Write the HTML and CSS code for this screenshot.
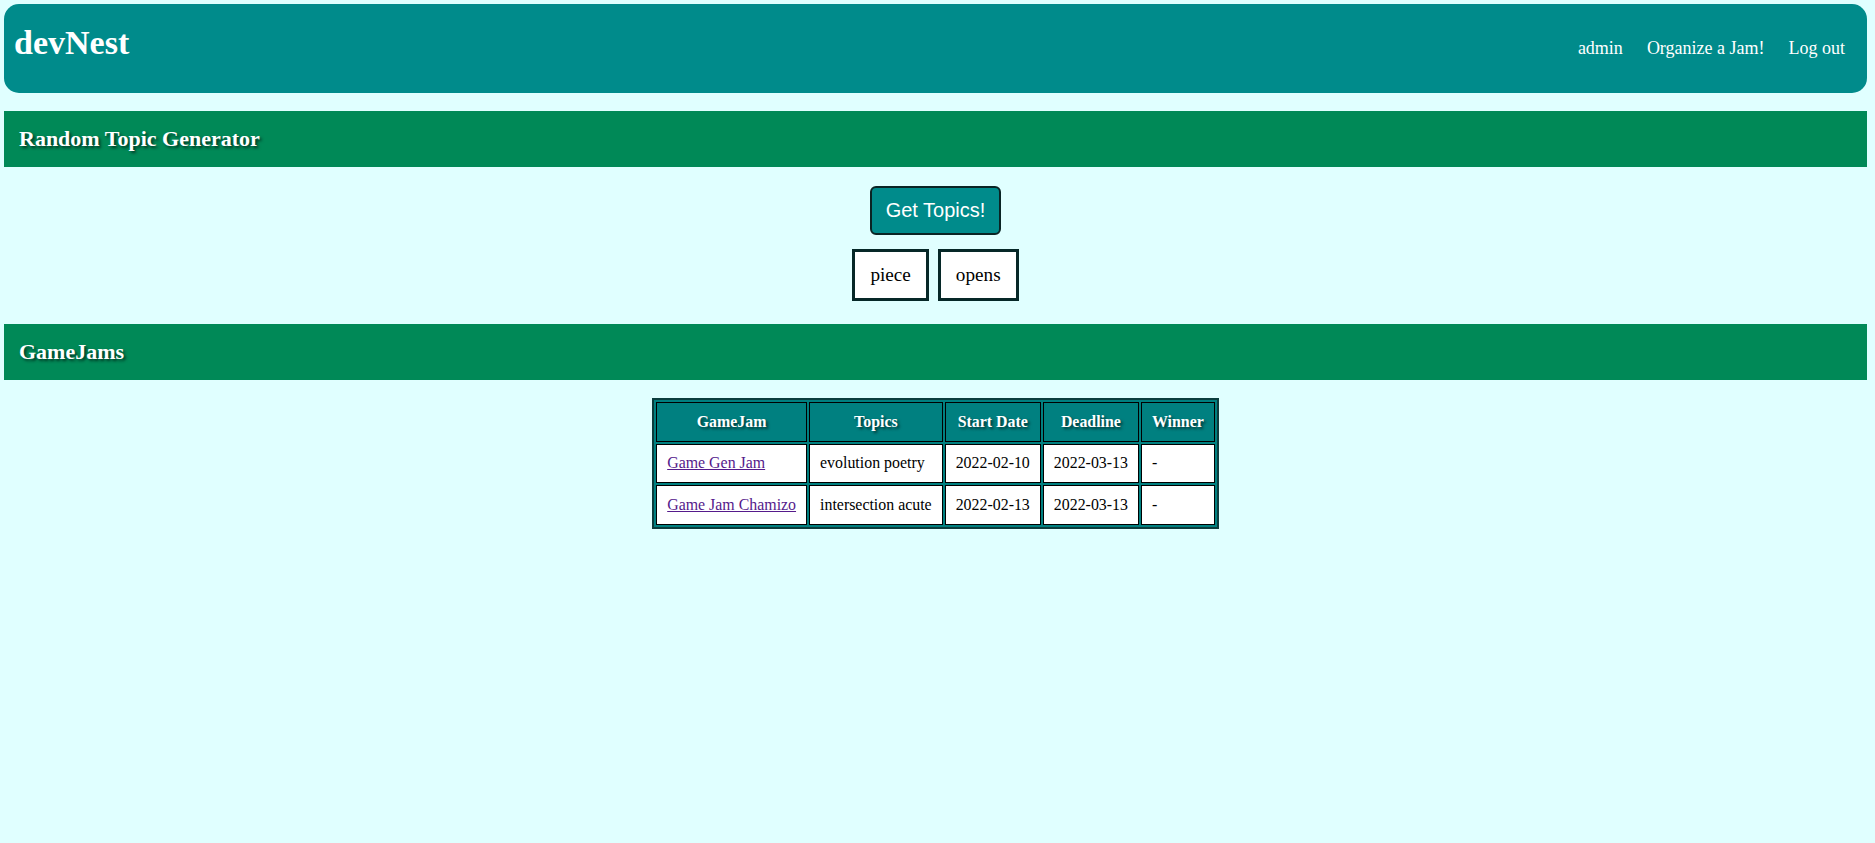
FILE: index.html
```html
<!DOCTYPE html>
<html>
<head>
<meta charset="utf-8">
<title>devNest</title>
<link rel="stylesheet" href="styles.css">
</head>
<body>
<header class="topbar">
  <h1 class="brand">devNest</h1>
  <nav class="nav">
    <a class="nav-link" href="#">admin</a>
    <a class="nav-link" href="#">Organize a Jam!</a>
    <a class="nav-link" href="#">Log out</a>
  </nav>
</header>

<section class="section">
  <h2 class="section-title">Random Topic Generator</h2>
  <div class="generator">
    <button class="btn">Get Topics!</button>
    <div class="topics">
      <span class="topic">piece</span>
      <span class="topic">opens</span>
    </div>
  </div>
</section>

<section class="section">
  <h2 class="section-title">GameJams</h2>
  <div class="table-wrap">
    <table class="jams">
      <thead>
        <tr>
          <th>GameJam</th>
          <th>Topics</th>
          <th>Start Date</th>
          <th>Deadline</th>
          <th>Winner</th>
        </tr>
      </thead>
      <tbody>
        <tr>
          <td><a class="jam-link" href="#">Game Gen Jam</a></td>
          <td>evolution poetry</td>
          <td>2022-02-10</td>
          <td>2022-03-13</td>
          <td>-</td>
        </tr>
        <tr>
          <td><a class="jam-link" href="#">Game Jam Chamizo</a></td>
          <td>intersection acute</td>
          <td>2022-02-13</td>
          <td>2022-03-13</td>
          <td>-</td>
        </tr>
      </tbody>
    </table>
  </div>
</section>
</body>
</html>
```

FILE: styles.css
```css
html, body {
  background: #e0ffff;
}
body {
  margin: 4px 8px 4px 4px;
  font-family: "Liberation Serif", "Times New Roman", serif;
  color: #000;
}

.topbar {
  display: flex;
  align-items: baseline;
  justify-content: space-between;
  background: #008b8b;
  border-radius: 15px;
  padding: 19px 22px 30px 10px;
  color: #fff;
}
.brand {
  margin: 0;
  font-size: 34px;
  font-weight: bold;
  line-height: 40px;
}
.nav {
  display: flex;
  gap: 24px;
  font-size: 18px;
}
.nav-link {
  color: #fff;
  text-decoration: none;
}

.section {
  margin-top: 18px;
}
.section + .section {
  margin-top: 23px;
}
.section-title {
  margin: 0;
  background: #008957;
  color: #fff;
  font-size: 22px;
  font-weight: bold;
  line-height: 25px;
  padding: 15px 15px 16px;
  text-shadow: 2px 2px 3px rgba(0, 0, 0, 0.6);
}

.generator {
  display: flex;
  flex-direction: column;
  align-items: center;
  padding-top: 19px;
}
.btn {
  font-family: "Liberation Sans", Arial, sans-serif;
  font-size: 20px;
  line-height: 23px;
  color: #fff;
  background: #008b8b;
  border: 2px solid #0a2424;
  border-radius: 6px;
  padding: 11px 14px;
  cursor: pointer;
}
.topics {
  display: flex;
  gap: 9px;
  margin-top: 14px;
}
.topic {
  display: block;
  background: #fff;
  border: 3px solid #062828;
  font-size: 19.2px;
  line-height: 22px;
  padding: 12px 15px;
}

.table-wrap {
  display: flex;
  justify-content: center;
  padding-top: 18px;
}
.jams {
  background: #008080;
  border: 2px solid #0b3d3d;
  border-spacing: 2px;
  font-size: 15.9px;
}
.jams th,
.jams td {
  border: 1px solid #000;
  padding: 9.5px 10px;
  line-height: 18.5px;
  white-space: nowrap;
}
.jams th {
  background: #008080;
  color: #fff;
  font-weight: bold;
  text-align: center;
  text-shadow: 2px 2px 3px rgba(0, 0, 0, 0.6);
}
.jams td {
  background: #fff;
  text-align: left;
}
.jam-link {
  color: #551a8b;
  text-decoration: underline;
}
```
